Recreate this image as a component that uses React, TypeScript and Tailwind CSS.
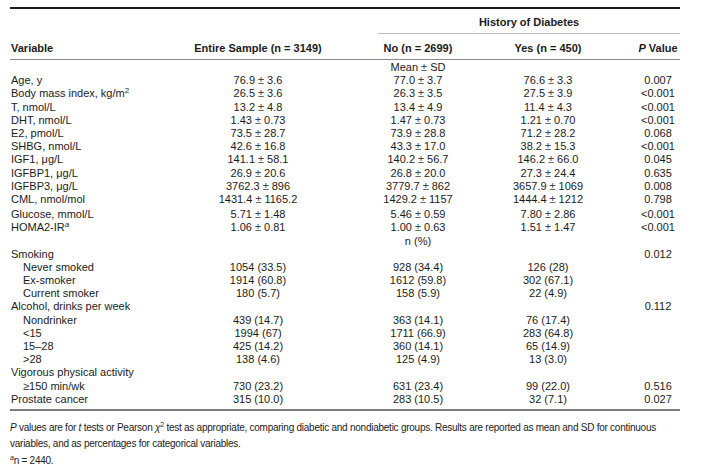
import React from "react";

type Row = {
  label: React.ReactNode;
  indent?: boolean;
  all?: string;
  no?: string;
  yes?: string;
  p?: string;
  gap?: boolean;
};

const rows: Row[] = [
  { label: "Age, y", all: "76.9 ± 3.6", no: "77.0 ± 3.7", yes: "76.6 ± 3.3", p: "0.007" },
  {
    label: (
      <>
        Body mass index, kg/m<sup className="text-[8px]">2</sup>
      </>
    ),
    all: "26.5 ± 3.6",
    no: "26.3 ± 3.5",
    yes: "27.5 ± 3.9",
    p: "<0.001",
  },
  { label: "T, nmol/L", all: "13.2 ± 4.8", no: "13.4 ± 4.9", yes: "11.4 ± 4.3", p: "<0.001" },
  { label: "DHT, nmol/L", all: "1.43 ± 0.73", no: "1.47 ± 0.73", yes: "1.21 ± 0.70", p: "<0.001" },
  { label: "E2, pmol/L", all: "73.5 ± 28.7", no: "73.9 ± 28.8", yes: "71.2 ± 28.2", p: "0.068" },
  { label: "SHBG, nmol/L", all: "42.6 ± 16.8", no: "43.3 ± 17.0", yes: "38.2 ± 15.3", p: "<0.001" },
  { label: "IGF1, μg/L", all: "141.1 ± 58.1", no: "140.2 ± 56.7", yes: "146.2 ± 66.0", p: "0.045" },
  { label: "IGFBP1, μg/L", all: "26.9 ± 20.6", no: "26.8 ± 20.0", yes: "27.3 ± 24.4", p: "0.635" },
  { label: "IGFBP3, μg/L", all: "3762.3 ± 896", no: "3779.7 ± 862", yes: "3657.9 ± 1069", p: "0.008" },
  { label: "CML, nmol/mol", all: "1431.4 ± 1165.2", no: "1429.2 ± 1157", yes: "1444.4 ± 1212", p: "0.798" },
  { label: "Glucose, mmol/L", all: "5.71 ± 1.48", no: "5.46 ± 0.59", yes: "7.80 ± 2.86", p: "<0.001", gap: true },
  {
    label: (
      <>
        HOMA2-IR<sup className="text-[8px] italic">a</sup>
      </>
    ),
    all: "1.06 ± 0.81",
    no: "1.00 ± 0.63",
    yes: "1.51 ± 1.47",
    p: "<0.001",
  },
  { label: "", no: "n (%)" },
  { label: "Smoking", p: "0.012" },
  { label: "Never smoked", indent: true, all: "1054 (33.5)", no: "928 (34.4)", yes: "126 (28)" },
  { label: "Ex-smoker", indent: true, all: "1914 (60.8)", no: "1612 (59.8)", yes: "302 (67.1)" },
  { label: "Current smoker", indent: true, all: "180 (5.7)", no: "158 (5.9)", yes: "22 (4.9)" },
  { label: "Alcohol, drinks per week", p: "0.112" },
  { label: "Nondrinker", indent: true, all: "439 (14.7)", no: "363 (14.1)", yes: "76 (17.4)" },
  { label: "<15", indent: true, all: "1994 (67)", no: "1711 (66.9)", yes: "283 (64.8)" },
  { label: "15–28", indent: true, all: "425 (14.2)", no: "360 (14.1)", yes: "65 (14.9)" },
  { label: ">28", indent: true, all: "138 (4.6)", no: "125 (4.9)", yes: "13 (3.0)" },
  { label: "Vigorous physical activity" },
  { label: "≥150 min/wk", indent: true, all: "730 (23.2)", no: "631 (23.4)", yes: "99 (22.0)", p: "0.516" },
  { label: "Prostate cancer", all: "315 (10.0)", no: "283 (10.5)", yes: "32 (7.1)", p: "0.027" },
];

// values like "76.9 ± 3.6" get the wider spacing round the ± seen in print
function Val({ v }: { v?: string }) {
  if (!v) return null;
  const parts = v.split(" ± ");
  if (parts.length < 2) return <>{v}</>;
  return (
    <>
      {parts[0]}
      <span className="px-[3px] text-[#444]">±</span>
      {parts[1]}
    </>
  );
}

function DataRow({ row }: { row: Row }) {
  return (
    <div className={`flex h-[13.2px] items-center leading-[13px] ${row.gap ? "mt-[2px]" : ""}`}>
      <div className={`w-[170px] whitespace-nowrap ${row.indent ? "pl-[13px]" : "pl-[1px]"}`}>{row.label}</div>
      <div className="w-[156px] text-center whitespace-nowrap">
        <Val v={row.all} />
      </div>
      <div className="w-[164px] text-center whitespace-nowrap">
        <Val v={row.no} />
      </div>
      <div className="w-[96px] text-center whitespace-nowrap">
        <Val v={row.yes} />
      </div>
      <div className="w-[84px] pl-[40px] text-center whitespace-nowrap">{row.p}</div>
    </div>
  );
}

export default function App() {
  return (
    <div className="w-[706px] h-[472px] bg-white text-[#1b1b1b] font-['Liberation_Sans',Arial,sans-serif] text-[11px] pt-[7px] pl-[10px]">
      <div className="w-[670px]">
        <div className="h-[2px] bg-[#1a1a1a]" />

        {/* group header */}
        <div className="flex">
          <div className="w-[368px]" />
          <div className="w-[302px] h-[25px] border-b-[1.5px] border-[#bdbdbd] flex items-center justify-center font-bold pt-[2px]">
            History of Diabetes
          </div>
        </div>

        {/* column headers */}
        <div className="flex h-[26px] items-center font-bold border-b-[1.5px] border-[#8a8a8a] pt-[3px] leading-none">
          <div className="w-[170px] pl-[1px]">Variable</div>
          <div className="w-[156px] text-center">Entire Sample (n = 3149)</div>
          <div className="w-[164px] text-center">No (n = 2699)</div>
          <div className="w-[96px] text-center whitespace-nowrap">Yes (n = 450)</div>
          <div className="w-[84px] pl-[40px] text-center whitespace-nowrap">
            <span className="italic">P</span> Value
          </div>
        </div>

        <div className="pt-[1px] pb-[3px] border-b-2 border-[#7d7d7d]">
          <DataRow row={{ label: "", no: "Mean ± SD" }} />
          {rows.map((r, i) => (
            <DataRow key={i} row={r} />
          ))}
        </div>

        {/* footnotes */}
        <div className="text-[10px] tracking-[-0.25px] text-[#222] pt-[9px] leading-[16px] whitespace-nowrap">
          <div>
            <span className="italic">P</span> values are for <span className="italic">t</span> tests or Pearson{" "}
            <span className="italic">χ</span>
            <sup className="text-[7px]">2</sup> test as appropriate, comparing diabetic and nondiabetic groups. Results are
            reported as mean and SD for continuous
          </div>
          <div>variables, and as percentages for categorical variables.</div>
          <div className="mt-[1px]">
            <sup className="text-[7px] italic">a</sup>n = 2440.
          </div>
        </div>
      </div>
    </div>
  );
}
